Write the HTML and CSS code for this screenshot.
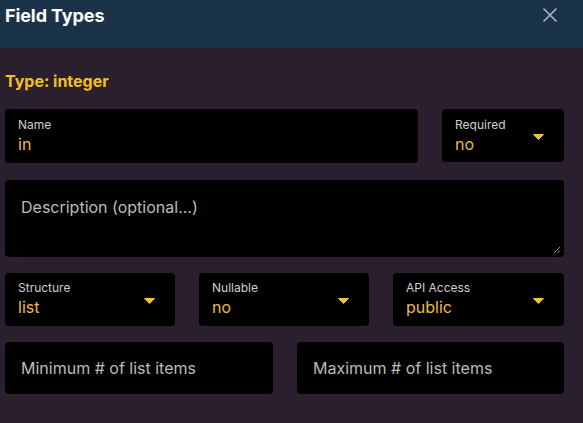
FILE: index.html
```html
<!DOCTYPE html>
<html>
<head>
<meta charset="utf-8">
<link rel="stylesheet" href="styles.css">
</head>
<body>
<div class="modal">
  <header class="head">
    <h1 class="title">Field Types</h1>
    <svg class="close" width="16" height="16" viewBox="0 0 16 16"><path d="M1.5 1.5 L14.5 14.5 M14.5 1.5 L1.5 14.5" stroke="#a9b3bd" stroke-width="1.6" fill="none"/></svg>
  </header>
  <main class="body">
    <div class="type">Type: integer</div>
    <div class="row row1">
      <div class="box field">
        <span class="label">Name</span>
        <span class="value">in</span>
      </div>
      <div class="box field select">
        <span class="label">Required</span>
        <span class="value">no</span>
        <svg class="caret" width="11" height="6" viewBox="0 0 11 6"><path d="M0.5 0.5 H10.5 L5.5 5.5 Z" fill="#f0c040" stroke="#f0c040" stroke-linejoin="round"/></svg>
      </div>
    </div>
    <div class="box desc">
      <span class="placeholder">Description (optional...)</span>
      <svg class="grip" width="8" height="8" viewBox="0 0 8 8"><path d="M7 1 L1 7 M7 4.5 L4.5 7" stroke="#9a9a9a" stroke-width="1"/></svg>
    </div>
    <div class="row row3">
      <div class="box field select">
        <span class="label">Structure</span>
        <span class="value">list</span>
        <svg class="caret" width="11" height="6" viewBox="0 0 11 6"><path d="M0.5 0.5 H10.5 L5.5 5.5 Z" fill="#f0c040" stroke="#f0c040" stroke-linejoin="round"/></svg>
      </div>
      <div class="box field select">
        <span class="label">Nullable</span>
        <span class="value">no</span>
        <svg class="caret" width="11" height="6" viewBox="0 0 11 6"><path d="M0.5 0.5 H10.5 L5.5 5.5 Z" fill="#f0c040" stroke="#f0c040" stroke-linejoin="round"/></svg>
      </div>
      <div class="box field select">
        <span class="label">API Access</span>
        <span class="value">public</span>
        <svg class="caret" width="11" height="6" viewBox="0 0 11 6"><path d="M0.5 0.5 H10.5 L5.5 5.5 Z" fill="#f0c040" stroke="#f0c040" stroke-linejoin="round"/></svg>
      </div>
    </div>
    <div class="row row4">
      <div class="box input"><span class="placeholder">Minimum # of list items</span></div>
      <div class="box input"><span class="placeholder">Maximum # of list items</span></div>
    </div>
  </main>
</div>
</body>
</html>
```
FILE: styles.css
```css
html, body {
  margin: 0;
  padding: 0;
  background: #2a1f2d;
  font-family: Inter, "Noto Sans", sans-serif;
}
.modal {
  width: 583px;
  height: 423px;
  overflow: hidden;
}
.head {
  height: 48px;
  background: #1b3349;
  display: flex;
  justify-content: space-between;
  align-items: flex-start;
  padding: 0 25px 0 5px;
  box-sizing: border-box;
}
.title {
  margin: 4px 0 0 0;
  font-size: 18px;
  font-weight: 700;
  color: #ffffff;
  line-height: 23px;
  letter-spacing: -0.1px;
}
.close {
  margin-top: 7px;
}
.body {
  padding: 23px 19px 0 5px;
  display: flex;
  flex-direction: column;
}
.type {
  font-size: 16px;
  font-weight: 700;
  color: #f5bd25;
  line-height: 20px;
  height: 20px;
  margin-bottom: 18px;
}
.row {
  display: grid;
  column-gap: 24px;
}
.row1 {
  grid-template-columns: 413px 122px;
  margin-bottom: 17px;
}
.row3 {
  grid-template-columns: 170px 170px 171px;
  margin-bottom: 16px;
}
.row4 {
  grid-template-columns: 268px 267px;
}
.box {
  background: #000000;
  border-radius: 4px;
  box-sizing: border-box;
  position: relative;
}
.field {
  height: 54px;
  padding: 8px 12px 0 13px;
  display: flex;
  flex-direction: column;
}
.row3 .field {
  height: 53px;
  padding-top: 7px;
}
.row1 .select {
  height: 53px;
}
.label {
  font-size: 12px;
  color: #cfcfcf;
  line-height: 15px;
}
.value {
  font-size: 16px;
  color: #edbb44;
  line-height: 22px;
  margin-top: 1px;
}
.caret {
  position: absolute;
  right: 20px;
  top: 25px;
}
.desc {
  height: 77px;
  padding: 17px 16px 0 16px;
  margin-bottom: 16px;
}
.placeholder {
  font-size: 16px;
  color: #bcbcbc;
  line-height: 20px;
}
.grip {
  position: absolute;
  right: 3px;
  bottom: 3px;
}
.input {
  height: 52px;
  padding: 16px 16px 0 16px;
}
```
